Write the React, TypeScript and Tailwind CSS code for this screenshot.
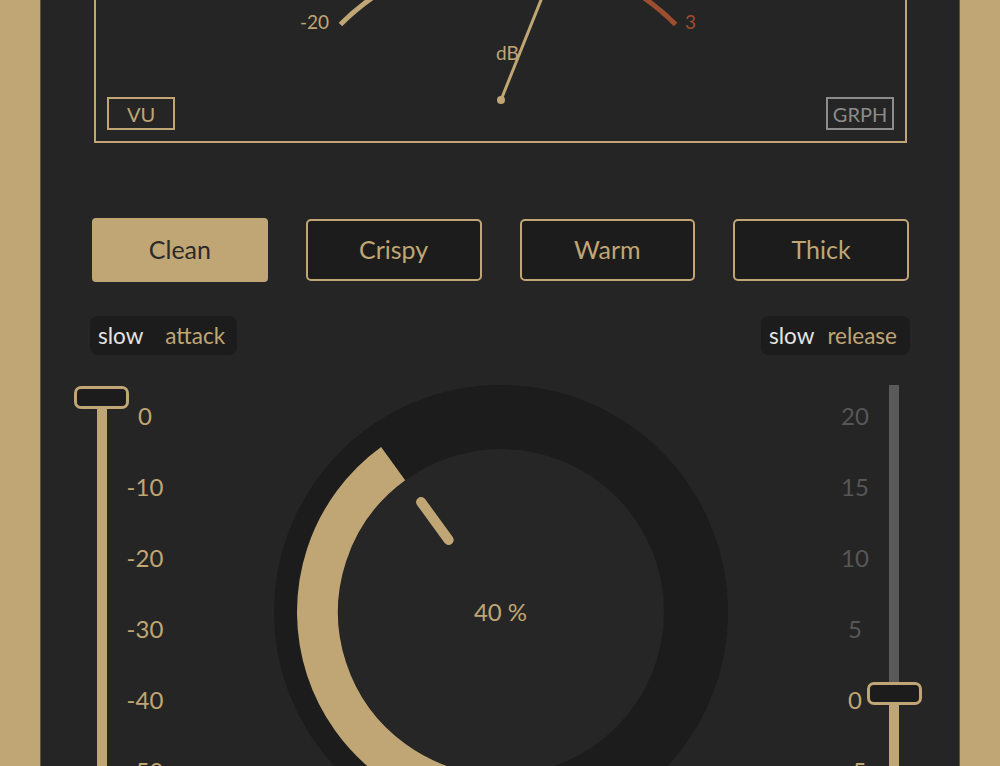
import React from "react";

const TAN = "#c0a674";

function Handle() {
  return (
    <div className="h-[23px] w-[55px] rounded-[7px] border-[3px] border-[#c0a674] bg-[#1c1c1c]" />
  );
}

function Meter() {
  // arc centre (412, 192) r 237 in svg coords (page x - 96)
  const cx = 412;
  const cy = 192;
  const r = 237;
  const pt = (deg: number) => {
    const a = (deg * Math.PI) / 180;
    return [cx + r * Math.sin(a), cy - r * Math.cos(a)];
  };
  const [lx, ly] = pt(-45);
  const [sx, sy] = pt(25);
  const [rx, ry] = pt(45);

  return (
    <div className="relative mx-[2px] flex h-[143px] flex-col justify-end border-x-2 border-b-2 border-[#c0a674] px-[11px] pb-[11px]">
      <span className="absolute left-[204px] top-[10px] text-[19px] leading-[24px] text-[#c0a674]">-20</span>
      <span className="absolute left-[589px] top-[10px] text-[19px] leading-[24px] text-[#9c4e2f]">3</span>
      <span className="absolute left-[400px] top-[41px] text-[19px] leading-[24px] text-[#c0a674]">dB</span>
      <svg className="pointer-events-none absolute left-0 top-0" width="810" height="141" viewBox="0 0 810 141">
        <path d={`M ${lx} ${ly} A ${r} ${r} 0 0 1 ${sx} ${sy}`} fill="none" stroke={TAN} strokeWidth="5" />
        <path d={`M ${sx} ${sy} A ${r} ${r} 0 0 1 ${rx} ${ry}`} fill="none" stroke="#9c4e2f" strokeWidth="5" />
        <line x1="405" y1="100" x2="455" y2="-25" stroke={TAN} strokeWidth="3" strokeLinecap="round" />
        <circle cx="405" cy="100" r="4" fill={TAN} />
      </svg>
      <div className="relative flex items-center justify-between">
        <div className="flex h-[33px] w-[68px] items-center justify-center border-2 border-[#c0a674] text-[20px] text-[#c0a674]">
          VU
        </div>
        <div className="flex h-[33px] w-[68px] items-center justify-center border-2 border-[#8c8c8c] text-[20px] text-[#8c8c8c]">
          GRPH
        </div>
      </div>
    </div>
  );
}

function Knob() {
  const c = 227;
  const polar = (deg: number, rad: number) => {
    const a = (deg * Math.PI) / 180;
    return [c + rad * Math.sin(a), c - rad * Math.cos(a)];
  };
  const ar = 183.5;
  const [x0, y0] = polar(180, ar);
  const [x1, y1] = polar(324, ar);
  const [ix0, iy0] = polar(324, 89);
  const [ix1, iy1] = polar(324, 136);

  return (
    <div className="relative h-[454px] w-[454px] mt-[5px]">
      <svg width="454" height="454" viewBox="0 0 454 454">
        <circle cx={c} cy={c} r="227" fill="#1c1c1c" />
        <circle cx={c} cy={c} r="163" fill="#262626" />
        <path d={`M ${x0} ${y0} A ${ar} ${ar} 0 0 1 ${x1} ${y1}`} fill="none" stroke={TAN} strokeWidth="41" />
        <line x1={ix0} y1={iy0} x2={ix1} y2={iy1} stroke={TAN} strokeWidth="10" strokeLinecap="round" />
      </svg>
      <div className="absolute inset-0 flex items-center justify-center text-[24px] text-[#c0a674]">
        40 %
      </div>
    </div>
  );
}

const leftLabels = ["0", "-10", "-20", "-30", "-40", "-50"];
const rightLabels = [
  { v: "20", on: false },
  { v: "15", on: false },
  { v: "10", on: false },
  { v: "5", on: false },
  { v: "0", on: true },
  { v: "-5", on: true },
];

export default function App() {
  return (
    <div
      className="h-[766px] w-[1000px] overflow-hidden bg-[#c0a674] px-[40px]"
      style={{ fontFamily: "Lato, 'Open Sans', sans-serif" }}
    >
      <div className="h-[900px] border-x border-[#5c513c] bg-[#252525] pl-[51px] pr-[50px]">
        <Meter />

        <div className="mt-[75px] grid grid-cols-4 gap-[38px]">
          <button className="h-[64px] rounded-[4px] bg-[#c0a674] text-[25px] text-[#2b2b2b]">Clean</button>
          <button className="h-[62px] mt-[1px] rounded-[5px] border-2 border-[#c0a674] bg-[#1c1c1c] text-[25px] text-[#c0a674]">Crispy</button>
          <button className="h-[62px] mt-[1px] rounded-[5px] border-2 border-[#c0a674] bg-[#1c1c1c] text-[25px] text-[#c0a674]">Warm</button>
          <button className="h-[62px] mt-[1px] rounded-[5px] border-2 border-[#c0a674] bg-[#1c1c1c] text-[25px] text-[#c0a674]">Thick</button>
        </div>

        <div className="mt-[34px] flex justify-between">
          <div className="-ml-[2px] flex h-[39px] items-center rounded-[8px] bg-[#1c1c1c] pl-[8px] pr-[12px] text-[22.5px]">
            <span className="text-[#e4e4e4]">slow</span>
            <span className="ml-[22px] text-[#c0a674]">attack</span>
          </div>
          <div className="-mr-[1px] flex h-[39px] items-center rounded-[8px] bg-[#1c1c1c] pl-[8px] pr-[13px] text-[22.5px]">
            <span className="text-[#e4e4e4]">slow</span>
            <span className="ml-[13px] text-[#c0a674]">release</span>
          </div>
        </div>

        <div className="mt-[25px] grid grid-cols-[1fr_454px_1fr]">
          <div className="-ml-[18px] flex">
            <div className="flex w-[55px] flex-col items-center">
              <div className="relative mt-[6px] flex w-[55px] flex-col items-center">
                <div className="mt-[19px] h-[500px] w-[10px] bg-[#c0a674]" />
                <div className="absolute left-0 top-0">
                  <Handle />
                </div>
              </div>
            </div>
            <div className="-ml-[4px] flex w-[40px] flex-col">
              {leftLabels.map((l) => (
                <div key={l} className="h-[71px] text-center text-[24px] leading-[71px] text-[#c0a674]">
                  {l}
                </div>
              ))}
            </div>
          </div>

          <Knob />

          <div className="-mr-[12px] flex justify-end">
            <div className="flex w-[28px] flex-col">
              {rightLabels.map((l) => (
                <div
                  key={l.v}
                  className={
                    l.on
                      ? "h-[71px] text-center text-[24px] leading-[71px] text-[#c0a674]"
                      : "h-[71px] text-center text-[24px] leading-[71px] text-[#575757]"
                  }
                >
                  {l.v}
                </div>
              ))}
            </div>
            <div className="-ml-[2px] flex w-[54px] flex-col items-center">
              <div className="relative mt-[5px] flex w-[54px] flex-col items-center">
                <div className="h-[300px] w-[10px] bg-[#5a5a5a]" />
                <div className="h-[200px] w-[10px] bg-[#c0a674]" />
                <div className="absolute left-0 top-[297px]">
                  <Handle />
                </div>
              </div>
            </div>
          </div>
        </div>
      </div>
    </div>
  );
}
